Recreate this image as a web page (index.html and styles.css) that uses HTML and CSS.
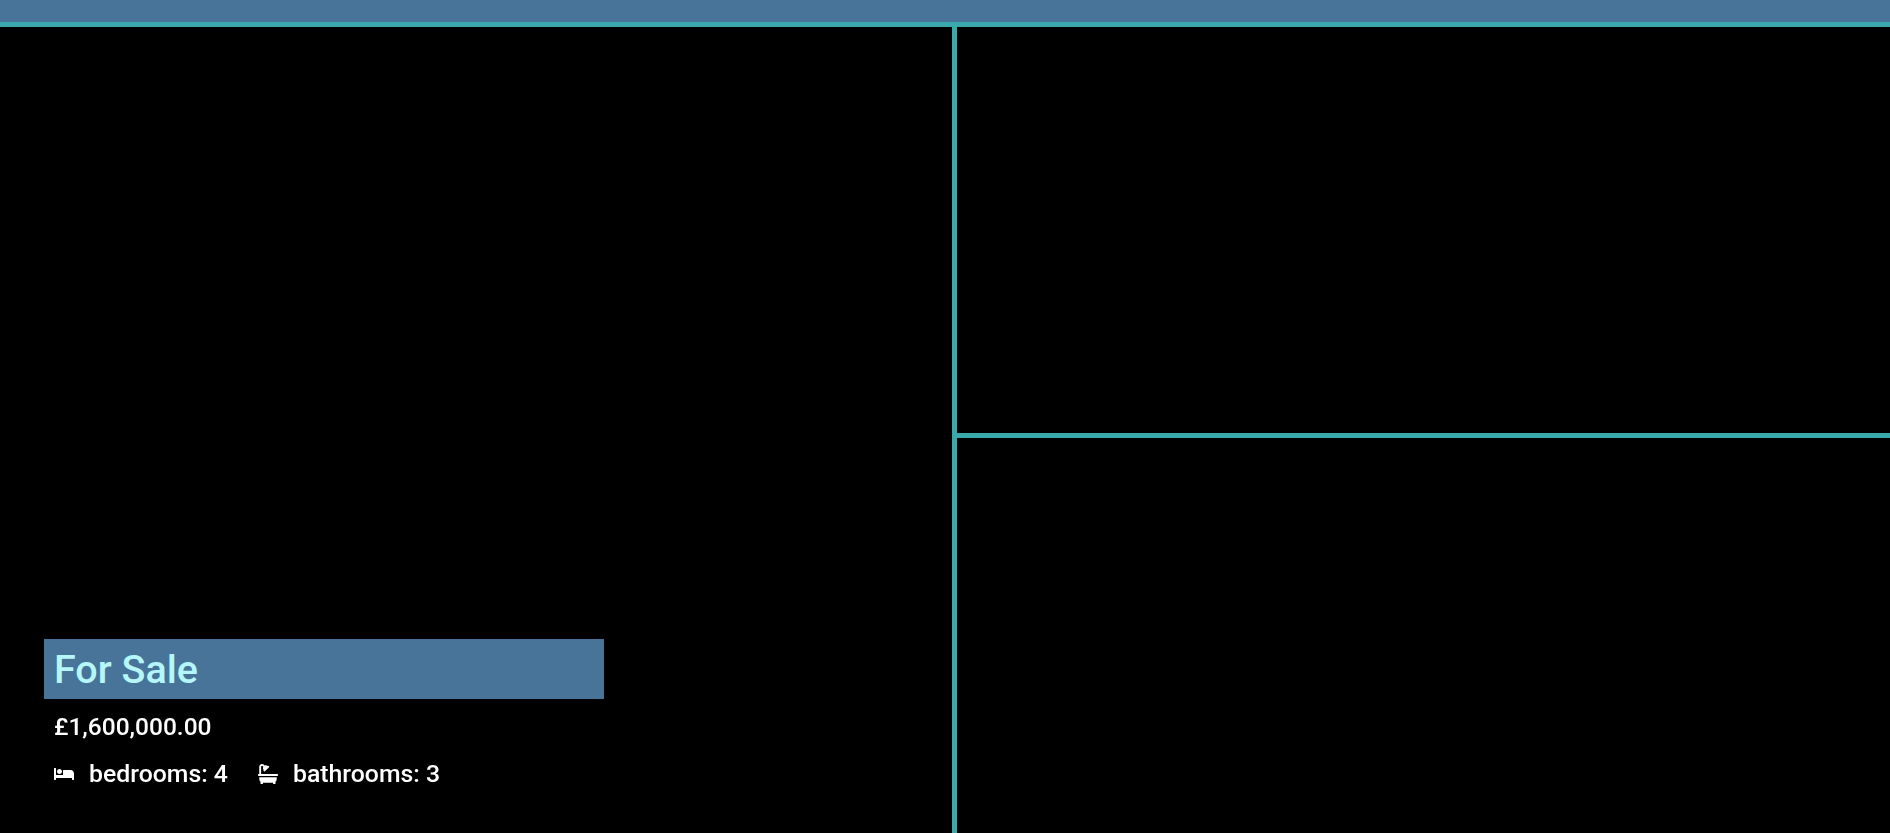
FILE: index.html
```html
<!DOCTYPE html>
<html lang="en">
<head>
<meta charset="utf-8">
<title>For Sale</title>
<link rel="stylesheet" href="styles.css">
</head>
<body>
<header class="topbar"></header>
<main class="gallery">
  <section class="hero">
    <div class="info">
      <h2 class="status">For Sale</h2>
      <p class="price">£1,600,000.00</p>
      <ul class="features">
        <li class="feature">
          <svg class="icon" viewBox="0 0 640 512" aria-hidden="true"><path fill="currentColor" d="M176 256c44.11 0 80-35.89 80-80s-35.89-80-80-80-80 35.89-80 80 35.89 80 80 80zm352-128H304c-8.84 0-16 7.16-16 16v144H64V80c0-8.84-7.16-16-16-16H16C7.16 64 0 71.16 0 80v352c0 8.84 7.16 16 16 16h32c8.84 0 16-7.16 16-16v-48h512v48c0 8.84 7.16 16 16 16h32c8.84 0 16-7.16 16-16V240c0-61.86-50.14-112-112-112z"/></svg>
          <span>bedrooms: 4</span>
        </li>
        <li class="feature">
          <svg class="icon icon-bath" viewBox="0 0 512 512" aria-hidden="true"><path fill="currentColor" d="M32,384a95.4,95.4,0,0,0,32,71.09V496a16,16,0,0,0,16,16h32a16,16,0,0,0,16-16V480H384v16a16,16,0,0,0,16,16h32a16,16,0,0,0,16-16V455.09A95.4,95.4,0,0,0,480,384V336H32ZM496,256H80V69.25a21.26,21.26,0,0,1,36.28-15l19.27,19.26c-13.13,29.88-7.61,59.11,8.62,79.73l-.17.17A16,16,0,0,0,144,176l11.31,11.31a16,16,0,0,0,22.63,0L283.31,81.94a16,16,0,0,0,0-22.63L272,48a16,16,0,0,0-22.62,0l-.17.17c-20.62-16.23-49.83-21.75-79.73-8.62L150.22,20.28A69.25,69.25,0,0,0,32,69.25V256H16A16,16,0,0,0,0,272v16a16,16,0,0,0,16,16H496a16,16,0,0,0,16-16V272A16,16,0,0,0,496,256Z"/></svg>
          <span>bathrooms: 3</span>
        </li>
      </ul>
    </div>
  </section>
  <section class="side-top"></section>
  <section class="side-bottom"></section>
</main>
</body>
</html>
```
FILE: styles.css
```css
* { box-sizing: border-box; }
html, body { height: 100%; margin: 0; }
body {
  display: flex;
  flex-direction: column;
  background: #000;
  color: #fff;
  font-family: Roboto, "Liberation Sans", sans-serif;
  overflow: hidden;
}
.topbar {
  flex: 0 0 27px;
  background: #487499;
  border-bottom: 5px solid #3aa9ab;
}
.gallery {
  flex: 1;
  display: grid;
  grid-template-columns: 957px 1fr;
  grid-template-rows: 411px 1fr;
  min-height: 0;
}
.hero {
  grid-row: 1 / span 2;
  border-right: 5px solid #3aa9ab;
  display: flex;
  flex-direction: column;
  justify-content: flex-end;
  padding: 0 0 45px 44px;
}
.side-top {
  border-bottom: 5px solid #3aa9ab;
  grid-column: 2;
}
.side-bottom { grid-column: 2; }
.info { width: 560px; }
.status {
  margin: 0;
  height: 60px;
  padding: 0 10px;
  display: flex;
  align-items: center;
  background: #487499;
  color: #b5f7f8;
  font-size: 39.5px;
  font-weight: 500;
}
.price {
  margin: 14px 0 0;
  padding: 0 10px;
  font-size: 24.5px;
  font-weight: 500;
  line-height: 28px;
  filter: blur(0.3px);
}
.features {
  list-style: none;
  margin: 19px 0 0;
  padding: 0 10px;
  display: flex;
  gap: 30px;
  font-size: 24.8px;
  font-weight: 500;
  line-height: 28px;
  filter: blur(0.3px);
}
.feature { display: flex; align-items: center; gap: 15px; }
.icon { width: 20px; height: 16px; }
.icon-bath { width: 20px; height: 20px; }
```
